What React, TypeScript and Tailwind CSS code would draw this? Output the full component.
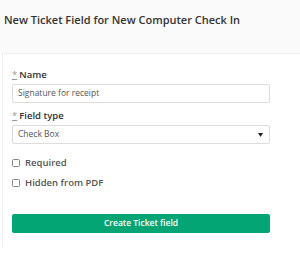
import React from "react";

export default function App() {
  return (
    <div className="w-[300px] h-[258px] bg-white overflow-hidden" style={{ fontFamily: '"Open Sans", sans-serif' }}>
      <div className="bg-[#fafafa] h-[53px] pl-[4px] pt-[11px]">
        <h1 className="text-[11px] font-semibold text-[#333] leading-[18px]">New Ticket Field for New Computer Check In</h1>
      </div>
      <div className="ml-[2px] h-[195px] border-l border-t border-[#eeeeee] bg-white pl-[9px] pt-[14px] w-[310px]">
        <div className="w-[258px]">
          <label className="block text-[9.5px] font-semibold text-[#333] leading-[13px] mb-[3px]">
            <span className="underline text-[#999] font-normal mr-[2px]">*</span>Name
          </label>
          <div className="h-[19px] border border-[#dddddd] rounded-[2px] flex items-center pl-[5px] text-[8.5px] text-[#555]">Signature for receipt</div>
          <label className="block text-[9.5px] font-semibold text-[#333] leading-[13px] mt-[6px] mb-[3px]">
            <span className="underline text-[#999] font-normal mr-[2px]">*</span>Field type
          </label>
          <div className="h-[19px] border border-[#dddddd] rounded-[2px] flex items-center justify-between pl-[5px] pr-[6px] text-[8.5px] text-[#555]">
            <span>Check Box</span>
            <svg width="5" height="4" viewBox="0 0 5 4"><path d="M0 0H5L2.5 4Z" fill="#222" /></svg>
          </div>
          <div className="mt-[13px] flex items-center gap-[5px] h-[12px]">
            <span className="w-[8px] h-[8px] border border-[#888] rounded-[1.5px] bg-white" />
            <span className="text-[9.5px] font-semibold text-[#555]">Required</span>
          </div>
          <div className="mt-[8px] flex items-center gap-[5px] h-[12px]">
            <span className="w-[8px] h-[8px] border border-[#888] rounded-[1.5px] bg-white" />
            <span className="text-[9.5px] font-semibold text-[#555]">Hidden from PDF</span>
          </div>
          <button className="mt-[25px] w-full h-[19px] bg-[#04a574] rounded-[2px] text-white text-[8.5px] font-semibold flex items-center justify-center">Create Ticket field</button>
        </div>
      </div>
    </div>
  );
}
